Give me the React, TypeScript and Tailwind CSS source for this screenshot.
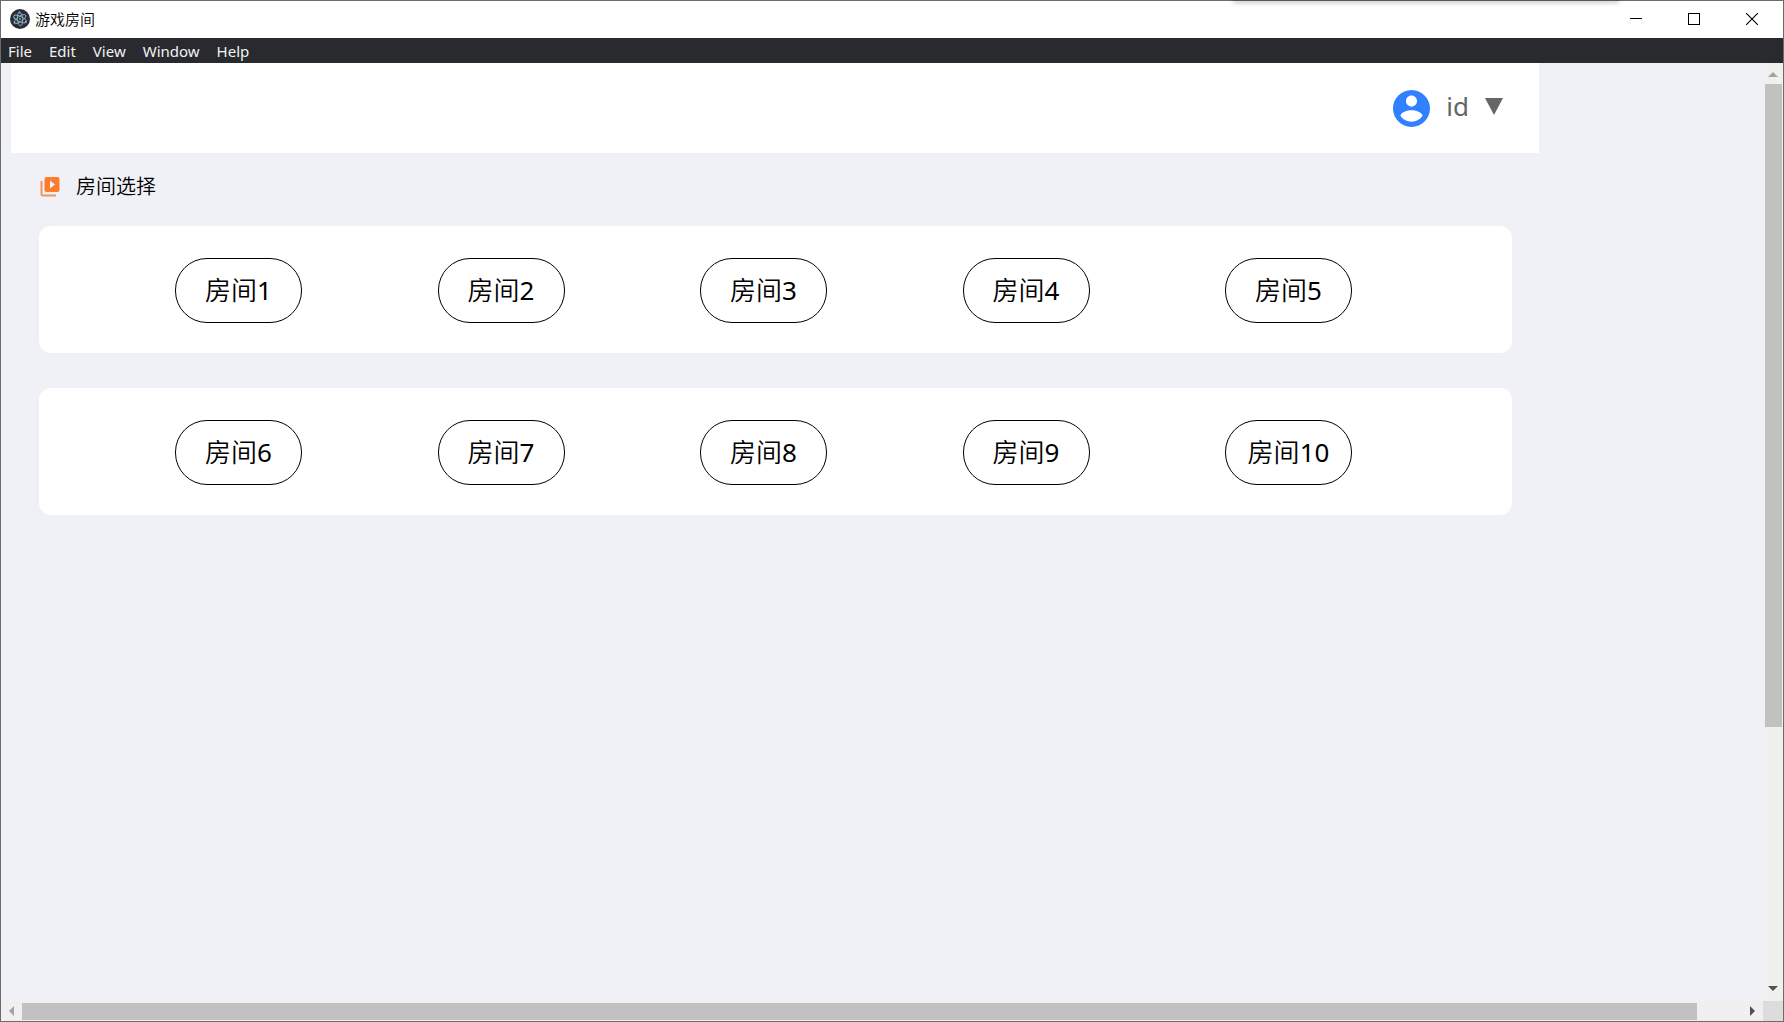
const menus = ['File', 'Edit', 'View', 'Window', 'Help'];

const roomRows = [
  [1, 2, 3, 4, 5],
  [6, 7, 8, 9, 10],
];

const TitleBar = () => {
  return (
    <header className="relative flex h-[37px] shrink-0 items-center bg-white pr-0.5 pb-0.5">
      <div className="absolute -top-px right-[164px] h-px w-[386px] bg-[#5a5558] shadow-[0_1px_4px_rgba(0,0,0,0.7)]"></div>
      <div className="flex grow items-center gap-[5px] pl-[9px]">
        <svg width="20" height="20" viewBox="0 0 20 20" fill="none">
          <circle cx="10" cy="10" r="10" fill="#2b2e3a" />
          <g stroke="#8fb4c0" strokeWidth="0.9">
            <ellipse cx="10" cy="10" rx="6.8" ry="2.6" transform="rotate(25 10 10)" />
            <ellipse cx="10" cy="10" rx="6.8" ry="2.6" transform="rotate(85 10 10)" />
            <ellipse cx="10" cy="10" rx="6.8" ry="2.6" transform="rotate(145 10 10)" />
          </g>
          <g fill="#8fb4c0">
            <circle cx="10" cy="10" r="0.9" />
            <circle cx="4.5" cy="13.5" r="1" />
            <circle cx="15.8" cy="12.8" r="1" />
            <circle cx="9.5" cy="3.6" r="1" />
          </g>
        </svg>
        <h1 className="text-[15px] leading-5 font-[350] text-black">游戏房间</h1>
      </div>
      <div className="flex h-full">
        <button aria-label="Minimize" className="flex w-[58px] items-center justify-center">
          <svg width="12" height="12" viewBox="0 0 12 12" shapeRendering="crispEdges">
            <path d="M0 5.5h12" stroke="#000" />
          </svg>
        </button>
        <button aria-label="Maximize" className="flex w-[58px] items-center justify-center">
          <svg width="12" height="12" viewBox="0 0 12 12" shapeRendering="crispEdges">
            <path d="M.5.5h11v11H.5z" fill="none" stroke="#000" />
          </svg>
        </button>
        <button aria-label="Close" className="flex w-[58px] items-center justify-center">
          <svg width="12" height="12" viewBox="0 0 12 12">
            <path d="M0 0l12 12M12 0L0 12" stroke="#000" strokeWidth="1.1" />
          </svg>
        </button>
      </div>
    </header>
  );
};

const MenuBar = () => {
  return (
    <nav className="flex h-[25px] shrink-0 items-center gap-[17px] bg-[#292a2d] px-[7px] text-[15px] leading-5 text-[#f1f3f4]">
      {menus.map((menu) => (
        <button key={menu}>{menu}</button>
      ))}
    </nav>
  );
};

const UserBar = () => {
  return (
    <div className="flex h-[90px] items-center justify-end bg-white pr-9 text-[#666]">
      <button className="flex items-center gap-4">
        <svg width="37" height="37" viewBox="2 2 20 20" fill="#3080ff">
          <path d="M12 2C6.48 2 2 6.48 2 12s4.48 10 10 10 10-4.48 10-10S17.52 2 12 2zm0 3c1.66 0 3 1.34 3 3s-1.34 3-3 3-3-1.34-3-3 1.34-3 3-3zm0 14.2c-2.5 0-4.71-1.28-6-3.22.03-1.99 4-3.08 6-3.08 1.99 0 5.97 1.09 6 3.08-1.29 1.94-3.5 3.22-6 3.22z" />
        </svg>
        <span className="flex items-center gap-4 pb-1">
          <span className="text-[26px] leading-8">id</span>
          <svg width="18" height="18" viewBox="0 0 18 18" fill="currentColor">
            <path d="M0 1h18L9 18z" />
          </svg>
        </span>
      </button>
    </div>
  );
};

const RoomRow = ({ rooms }: { rooms: number[] }) => {
  return (
    <div className="flex justify-between rounded-xl bg-white pt-8 pr-40 pb-[30px] pl-[136px]">
      {rooms.map((room) => (
        <button
          key={room}
          className="h-[65px] w-[127px] rounded-[32px] border border-black pb-0.5 text-[26px] leading-8 font-[350] text-black"
        >
          房间<span className="font-normal">{room}</span>
        </button>
      ))}
    </div>
  );
};

const Arrow = ({ d, color }: { d: string; color: string }) => {
  return (
    <svg width="10" height="10" viewBox="0 0 10 10" fill={color}>
      <path d={d} />
    </svg>
  );
};

const VerticalScrollbar = () => {
  return (
    <div className="flex w-5 shrink-0 flex-col items-center bg-[#f0f0f0]">
      <div className="flex h-[21px] items-center">
        <Arrow d="M0 8l5-5 5 5z" color="#a3a3a3" />
      </div>
      <div className="flex grow flex-col">
        <div className="h-[72%] w-[17px] bg-[#c1c1c1]"></div>
      </div>
      <div className="flex h-6 items-center">
        <Arrow d="M0 2h10l-5 5z" color="#505050" />
      </div>
    </div>
  );
};

const HorizontalScrollbar = () => {
  return (
    <div className="flex h-5 shrink-0">
      <div className="flex grow items-center bg-[#f0f0f0]">
        <div className="flex w-[21px] justify-center">
          <Arrow d="M7 0v10L2 5z" color="#a3a3a3" />
        </div>
        <div className="grow">
          <div className="h-[17px] w-[97.4%] bg-[#c1c1c1]"></div>
        </div>
        <div className="flex w-[21px] justify-center">
          <Arrow d="M2 0l5 5-5 5z" color="#505050" />
        </div>
      </div>
      <div className="w-5 bg-[#dcdcdc]"></div>
    </div>
  );
};

const App = () => {
  return (
    <div className="flex min-h-screen flex-col border border-[#6b6b6b] bg-[#f0f1f7] font-['Noto_Sans','Noto_Sans_CJK_SC',sans-serif]">
      <TitleBar />
      <MenuBar />
      <div className="flex grow">
        <main className="grow pl-[10px]">
          <div className="w-full max-w-[1528px]">
            <UserBar />
            <section className="pr-[27px] pl-7">
              <div className="flex h-[73px] items-center gap-4 pb-1.5 pl-px">
                <svg width="20" height="20" viewBox="0 0 20 20" fill="#fa7d2d">
                  <path d="M6.5 0h11a2 2 0 0 1 2 2v11a2 2 0 0 1-2 2h-11a2 2 0 0 1-2-2V2a2 2 0 0 1 2-2zM10 3.5v8l5-4z" fillRule="evenodd" />
                  <path d="M1.5 4v13A1.5 1.5 0 0 0 3 18.500h13" fill="none" stroke="#fa7d2d" strokeWidth="2" strokeOpacity="0.8" />
                </svg>
                <h2 className="text-xl font-[350] text-black">房间选择</h2>
              </div>
              <div className="flex flex-col gap-[35px]">
                {roomRows.map((rooms) => (
                  <RoomRow key={rooms[0]} rooms={rooms} />
                ))}
              </div>
            </section>
          </div>
        </main>
        <VerticalScrollbar />
      </div>
      <HorizontalScrollbar />
    </div>
  );
};

export default App;
